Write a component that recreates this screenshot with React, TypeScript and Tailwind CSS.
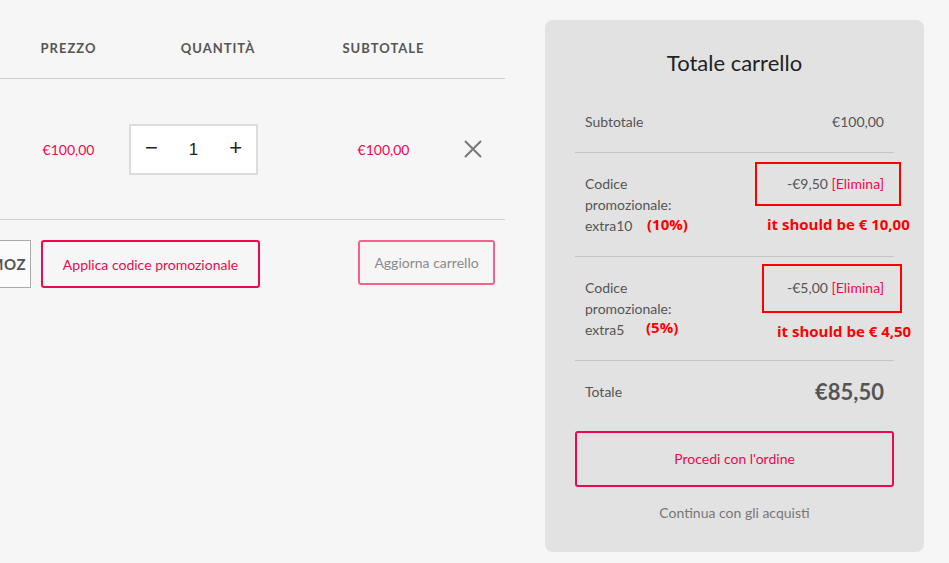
import React from "react";

const RED = "text-[#f2074f]";

export default function App() {
  return (
    <div className="w-[949px] h-[563px] bg-[#f6f6f6] overflow-hidden flex font-['Lato','Open_Sans',sans-serif] text-[#555]">
      {/* Left table */}
      <div className="w-[505px] flex flex-col">
        <div className="h-[79px] pt-[20px] flex items-center border-b border-[#cfcfcf] text-[13px] font-bold tracking-[1px] text-[#555] uppercase">
          <div className="w-[129px] pl-[8px] text-center">Prezzo</div>
          <div className="w-[178px] text-center">Quantità</div>
          <div className="w-[153px] text-center">Subtotale</div>
          <div className="flex-1" />
        </div>
        <div className="h-[141px] flex items-center border-b border-[#cfcfcf] text-[14px]">
          <div className={`w-[129px] pl-[8px] text-center ${RED}`}>€100,00</div>
          <div className="w-[178px] flex">
            <div className="w-[129px] h-[51px] bg-white border-2 border-[#dcdcdc] flex items-center justify-between px-[14px] font-['Liberation_Sans',sans-serif] text-[#222]">
              <span className="text-[22px] leading-none pb-[2px]">−</span>
              <span className="text-[17px] leading-none">1</span>
              <span className="text-[22px] leading-none pb-[2px]">+</span>
            </div>
          </div>
          <div className={`w-[153px] text-center ${RED}`}>€100,00</div>
          <div className="w-[24px] flex justify-center pl-[2px]">
            <svg width="20" height="20" viewBox="0 0 20 20">
              <path d="M2 2 L18 18 M18 2 L2 18" stroke="#777" strokeWidth="2" fill="none" />
            </svg>
          </div>
        </div>
        <div className="pt-[20px] flex items-start">
          <div className="w-[31px] h-[48px] bg-[#fbfbfb] border border-[#aaa] border-l-0 overflow-hidden flex justify-end items-center pr-[4px]">
            <span className="text-[15px] font-bold text-[#555] whitespace-nowrap tracking-[0.5px]">MOZ</span>
          </div>
          <div className={`ml-[10px] w-[219px] h-[48px] border-2 border-[#f2074f] rounded-[3px] flex items-center justify-center text-[14px] ${RED}`}>
            Applica codice promozionale
          </div>
          <div className="ml-[98px] w-[137px] h-[45px] border-2 border-[#f6628e] rounded-[3px] flex items-center justify-center text-[14px] text-[#8a8a8a]">
            Aggiorna carrello
          </div>
        </div>
      </div>

      {/* Cart totals card */}
      <div className="ml-[40px] mt-[20px] w-[379px] h-[532px] bg-[#e2e2e2] rounded-[8px] px-[30px] pt-[28px] relative">
        <div className="text-[22px] leading-[30px] text-center text-[#222]">Totale carrello</div>
        <div className="mt-[14px] pt-[19px] pb-[20px] px-[10px] flex justify-between text-[14px] leading-[21px] border-b border-[#c5c5c5]">
          <span>Subtotale</span>
          <span>€100,00</span>
        </div>
        <div className="py-[20px] px-[10px] flex justify-between text-[14px] leading-[21px] border-b border-[#c5c5c5]">
          <div className="flex flex-col items-start">
            <span>Codice</span>
            <span>promozionale:</span>
            <span>extra10</span>
          </div>
          <span>-€9,50 <span className="text-[#f2074f]">[Elimina]</span></span>
        </div>
        <div className="py-[20px] px-[10px] flex justify-between text-[14px] leading-[21px] border-b border-[#c5c5c5]">
          <div className="flex flex-col items-start">
            <span>Codice</span>
            <span>promozionale:</span>
            <span>extra5</span>
          </div>
          <span>-€5,00 <span className="text-[#f2074f]">[Elimina]</span></span>
        </div>
        <div className="h-[60px] px-[10px] flex justify-between items-center text-[14px]">
          <span>Totale</span>
          <span className="text-[22px] font-bold text-[#555]">€85,50</span>
        </div>
        <div className={`mt-[10px] h-[56px] border-2 border-[#f2074f] rounded-[3px] flex items-center justify-center text-[14px] pb-[1px] ${RED}`}>
          Procedi con l'ordine
        </div>
        <div className="mt-[15px] text-center text-[14px] leading-[21px] text-[#777]">Continua con gli acquisti</div>

        {/* Annotations */}
        <div className="absolute left-[210px] top-[142px] w-[146px] h-[44px] border-2 border-[#ff0000]" />
        <div className="absolute left-[102px] top-[194px] text-[15px] font-bold text-[#ff0000] leading-[20px] font-['Open_Sans',sans-serif]">(10%)</div>
        <div className="absolute left-[222px] top-[194px] text-[15px] font-bold text-[#ff0000] leading-[20px] whitespace-nowrap font-['Open_Sans',sans-serif]">it should be € 10,00</div>
        <div className="absolute left-[217px] top-[244px] w-[140px] h-[49px] border-2 border-[#ff0000]" />
        <div className="absolute left-[101px] top-[297px] text-[15px] font-bold text-[#ff0000] leading-[20px] font-['Open_Sans',sans-serif]">(5%)</div>
        <div className="absolute left-[232px] top-[301px] text-[15px] font-bold text-[#ff0000] leading-[20px] whitespace-nowrap font-['Open_Sans',sans-serif]">it should be € 4,50</div>
      </div>
    </div>
  );
}
